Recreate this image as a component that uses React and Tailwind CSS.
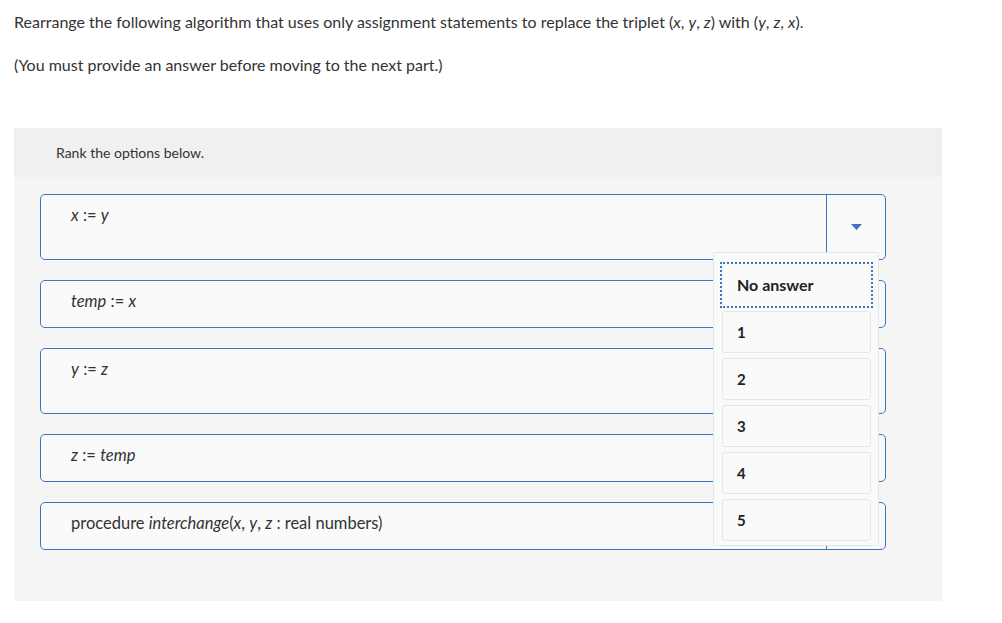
import React from 'react';

const rows = [
  { h: 'h-[66px]', content: <><i>x</i> := <i>y</i></> },
  { h: 'h-[48px]', content: <><i>temp</i> := <i>x</i></> },
  { h: 'h-[66px]', content: <><i>y</i> := <i>z</i></> },
  { h: 'h-[48px]', content: <><i>z</i> := <i>temp</i></> },
  { h: 'h-[48px]', content: <>procedure <i>interchange</i>(<i>x</i>, <i>y</i>, <i>z</i> : real numbers)</> },
];

function Row({ h, children, first }) {
  return (
    <div className={`${h} flex border border-[#3b76bd] rounded-[5px] bg-[#fafafa]`}>
      <div className="flex-1 pl-[30px] pt-[8px] text-[16.5px] leading-[24px] text-[#333]">{children}</div>
      <div className="w-[59px] border-l border-[#3b76bd] flex items-center justify-center">
        {first && (
          <svg width="11" height="6" viewBox="0 0 11 6">
            <path d="M0 0H11L5.5 6Z" fill="#3b76bd" />
          </svg>
        )}
      </div>
    </div>
  );
}

export default function App() {
  return (
    <div className="w-[1002px] h-[623px] bg-white font-['Lato',sans-serif] text-[#333]">
      <div className="px-[14px] pt-[12px]">
        <p className="text-[16px] leading-[20px]">
          Rearrange the following algorithm that uses only assignment statements to replace the triplet (<i>x</i>, <i>y</i>, <i>z</i>) with (<i>y</i>, <i>z</i>, <i>x</i>).
        </p>
        <p className="text-[16px] leading-[20px] mt-[23px]">
          (You must provide an answer before moving to the next part.)
        </p>
      </div>

      <div className="mx-[14px] mt-[53px] w-[928px] bg-[#f5f5f5]">
        <div className="h-[49px] bg-[#f0f0f0] pl-[42px] flex items-center text-[14px] text-[#333]">
          Rank the options below.
        </div>
        <div className="relative pt-[17px] pb-[51px] pl-[26px] pr-[56px] flex flex-col gap-[20px]">
          {rows.map((r, i) => (
            <Row key={i} h={r.h} first={i === 0}>{r.content}</Row>
          ))}

          <div className="absolute left-[699px] top-[75px] w-[166px] h-[294px] bg-[#fafafa] border border-[#e6e6e6] rounded-[3px] pt-[9px] pl-[6px] pr-[5px]">
            <div className="h-[46px] border-2 border-dotted border-[#3b76bd] flex items-center pl-[15px] text-[16px] font-bold text-[#222]">
              No answer
            </div>
            <div className="flex flex-col gap-[5px] mt-[3px] pl-[2px] pr-[2px]">
              {[1, 2, 3, 4, 5].map((n) => (
                <div key={n} className="h-[42px] border border-[#e6e6e6] rounded-[3px] bg-[#fafafa] flex items-center pl-[14px] text-[15px] font-bold text-[#222]">
                  {n}
                </div>
              ))}
            </div>
          </div>
        </div>
      </div>
    </div>
  );
}
